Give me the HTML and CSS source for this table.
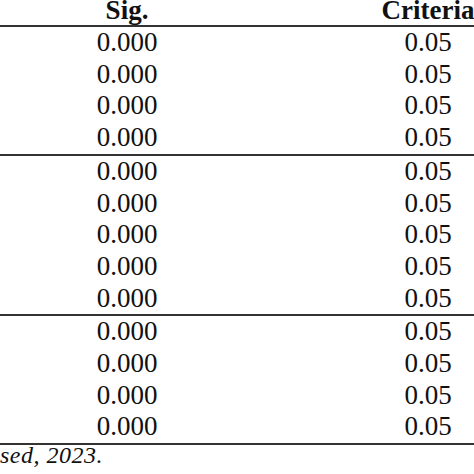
FILE: index.html
```html
<!DOCTYPE html>
<html>
<head>
<meta charset="utf-8">
<link rel="stylesheet" href="styles.css">
</head>
<body>
<div class="page">
  <table class="stats">
    <colgroup><col class="c1"><col class="c2"></colgroup>
    <thead>
      <tr><th>Sig.</th><th>Criteria</th></tr>
    </thead>
    <tbody>
      <tr><td>0.000</td><td>0.05</td></tr>
      <tr><td>0.000</td><td>0.05</td></tr>
      <tr><td>0.000</td><td>0.05</td></tr>
      <tr><td>0.000</td><td>0.05</td></tr>
    </tbody>
    <tbody>
      <tr><td>0.000</td><td>0.05</td></tr>
      <tr><td>0.000</td><td>0.05</td></tr>
      <tr><td>0.000</td><td>0.05</td></tr>
      <tr><td>0.000</td><td>0.05</td></tr>
      <tr><td>0.000</td><td>0.05</td></tr>
    </tbody>
    <tbody class="last">
      <tr><td>0.000</td><td>0.05</td></tr>
      <tr><td>0.000</td><td>0.05</td></tr>
      <tr><td>0.000</td><td>0.05</td></tr>
      <tr><td>0.000</td><td>0.05</td></tr>
    </tbody>
  </table>
  <div class="source"><span>Source: Processed, 2023.</span></div>
</div>
</body>
</html>
```

FILE: styles.css
```css
html, body {
  margin: 0;
  padding: 0;
  background: #ffffff;
}
body {
  width: 474px;
  height: 474px;
  overflow: hidden;
}
.page {
  font-family: "Liberation Serif", "Times New Roman", serif;
  color: #111111;
}
.stats {
  border-collapse: separate;
  border-spacing: 0;
  table-layout: fixed;
  width: 602px;
}
.c1 { width: 254px; }
.c2 { width: 348px; }
.stats th {
  font-size: 27px;
  font-weight: bold;
  line-height: 20px;
  height: 20px;
  padding: 0 0 5px 0;
  text-align: center;
  vertical-align: top;
}
.stats td {
  font-size: 27px;
  line-height: 31.7px;
  padding: 0;
  text-align: center;
  vertical-align: top;
}
.stats tbody tr:first-child td {
  border-top: 2px solid #333333;
}
.stats tbody.last tr:last-child td {
  border-bottom: 2px solid #333333;
}
.source {
  width: 103px;
  display: flex;
  justify-content: flex-end;
  font-size: 24px;
  letter-spacing: 0.5px;
  font-style: italic;
  line-height: 20px;
  white-space: nowrap;
}
```
